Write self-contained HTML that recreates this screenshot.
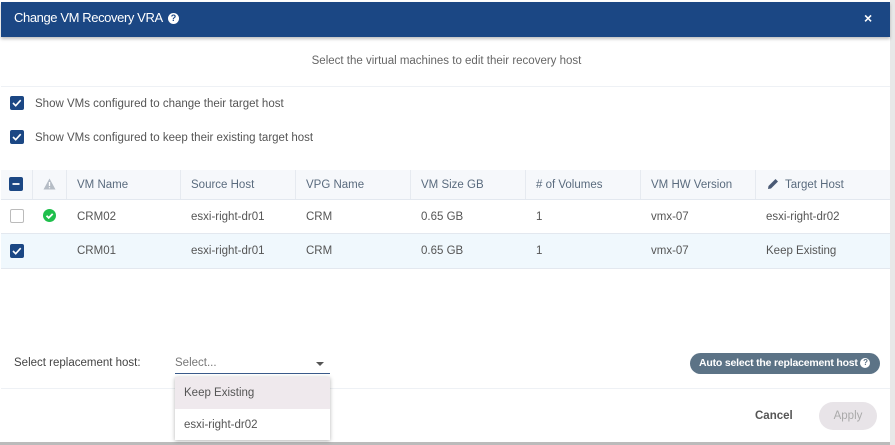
<!DOCTYPE html><html><head><style>
body{margin:0;width:895px;height:445px;background:#fff;font-family:"Liberation Sans",sans-serif;position:relative;overflow:hidden;font-size:11.5px;color:#555}
.a{position:absolute;white-space:nowrap}
.hdr{left:1px;top:2px;width:889px;height:35px;background:#1b4784;box-shadow:0 2px 3px rgba(0,0,0,.25)}
.cb{position:absolute;width:14px;height:14px;border-radius:2px;background:#1b4784}
.cb svg{position:absolute;left:1px;top:1px}
.cbe{position:absolute;width:12px;height:12px;border:1px solid #bbb;border-radius:2px;background:#fff}
.row{position:absolute;left:1px;width:889px;border-bottom:1px solid #e3e8ef}
.c{position:absolute;top:1px;line-height:inherit;white-space:nowrap}
</style></head><body>
<div style="position:absolute;left:890px;top:0;width:5px;height:445px;background:#e8e8e8"></div>
<div class="a" style="left:0;top:442px;width:890px;height:3px;background:#bbb"></div>
<div class="a hdr"></div>
<div class="a" style="left:14px;top:10px;color:#fff;font-size:13px;letter-spacing:-0.4px">Change VM Recovery VRA</div>
<div class="a" style="left:168px;top:13px;width:11px;height:11px;border-radius:50%;background:#fff;color:#1b4784;font-size:9px;font-weight:bold;text-align:center;line-height:11px">?</div>
<div class="a" style="left:864px;top:10px;color:#fff;font-size:14px;font-weight:bold">×</div>
<div class="a" style="left:0;top:55px;width:893px;text-align:center;color:#666">Select the virtual machines to edit their recovery host</div>
<div class="a" style="left:1px;top:86px;width:889px;border-top:1px solid #eef1f5"></div>
<div class="cb" style="left:10px;top:96px"><svg width="12" height="12"><path d="M2 6l2.7 2.7 5-5.5" stroke="#fff" stroke-width="1.6" fill="none"/></svg></div>
<div class="a" style="left:35px;top:98px">Show VMs configured to change their target host</div>
<div class="cb" style="left:10px;top:130px"><svg width="12" height="12"><path d="M2 6l2.7 2.7 5-5.5" stroke="#fff" stroke-width="1.6" fill="none"/></svg></div>
<div class="a" style="left:35px;top:132px">Show VMs configured to keep their existing target host</div>

<div class="row" style="top:170px;height:29px;line-height:29px;background:#f6f8fb;color:#5a6b7e">
<div class="cb" style="left:8px;top:7px"><svg width="12" height="12"><path d="M2.5 6h7" stroke="#fff" stroke-width="1.8"/></svg></div>
<div class="c" style="left:31px;top:0;height:29px;border-left:1px solid #e6eaf0"></div>
<svg class="a" style="left:42px;top:8px" width="13" height="12"><path d="M6.5 0.5L12.5 11.5H0.5Z" fill="#b5bcc5"/><path d="M6.5 4v4M6.5 9.3v1" stroke="#fff" stroke-width="1.3"/></svg>
<div class="c" style="left:65px;top:0;height:29px;border-left:1px solid #e6eaf0"></div>
<div class="c" style="left:76px">VM Name</div>
<div class="c" style="left:179px;top:0;height:29px;border-left:1px solid #e6eaf0"></div>
<div class="c" style="left:190px">Source Host</div>
<div class="c" style="left:294px;top:0;height:29px;border-left:1px solid #e6eaf0"></div>
<div class="c" style="left:305px">VPG Name</div>
<div class="c" style="left:409px;top:0;height:29px;border-left:1px solid #e6eaf0"></div>
<div class="c" style="left:420px">VM Size GB</div>
<div class="c" style="left:524px;top:0;height:29px;border-left:1px solid #e6eaf0"></div>
<div class="c" style="left:535px"># of Volumes</div>
<div class="c" style="left:639px;top:0;height:29px;border-left:1px solid #e6eaf0"></div>
<div class="c" style="left:650px">VM HW Version</div>
<div class="c" style="left:754px;top:0;height:29px;border-left:1px solid #e6eaf0"></div>
<svg class="a" style="left:766px;top:8px" width="12" height="12"><path d="M1 11l0.5-3 7-7 2.5 2.5-7 7z" fill="#4a5a75"/></svg>
<div class="c" style="left:784px">Target Host</div>
</div>

<div class="row" style="top:200px;height:33px;line-height:32px">
<div class="cbe" style="left:9px;top:9px"></div>
<svg class="a" style="left:42px;top:9px" width="13" height="13"><circle cx="6.5" cy="6.5" r="6.5" fill="#1fbf4c"/><path d="M3.5 6.7l2.2 2.2 4-4" stroke="#fff" stroke-width="1.8" fill="none"/></svg>
<div class="c" style="left:76px">CRM02</div><div class="c" style="left:190px">esxi-right-dr01</div><div class="c" style="left:305px">CRM</div><div class="c" style="left:420px">0.65 GB</div><div class="c" style="left:535px">1</div><div class="c" style="left:650px">vmx-07</div><div class="c" style="left:765px">esxi-right-dr02</div>
</div>
<div class="row" style="top:234px;height:34px;line-height:33px;background:#f0f8fd">
<div class="cb" style="left:9px;top:10px"><svg width="12" height="12"><path d="M2 6l2.7 2.7 5-5.5" stroke="#fff" stroke-width="1.6" fill="none"/></svg></div>
<div class="c" style="left:76px">CRM01</div><div class="c" style="left:190px">esxi-right-dr01</div><div class="c" style="left:305px">CRM</div><div class="c" style="left:420px">0.65 GB</div><div class="c" style="left:535px">1</div><div class="c" style="left:650px">vmx-07</div><div class="c" style="left:765px">Keep Existing</div>
</div>

<div class="a" style="left:14px;top:357px;color:#444">Select replacement host:</div>
<div class="a" style="left:175px;top:357px;width:155px;height:16px;border-bottom:1.5px solid #3a5a8a;color:#777">Select...</div>
<div class="a" style="left:316px;top:362px;width:0;height:0;border-left:4px solid transparent;border-right:4px solid transparent;border-top:4px solid #555"></div>
<div class="a" style="left:1px;top:388px;width:889px;border-top:1px solid #eef1f5"></div>
<div class="a" style="left:175px;top:377px;width:155px;height:63px;background:#fff;box-shadow:0 1px 4px rgba(0,0,0,.3)">
<div style="height:32px;line-height:33px;background:#efe9ed;padding-left:9px;color:#555">Keep Existing</div>
<div style="height:31px;line-height:32px;padding-left:9px;color:#555">esxi-right-dr02</div>
</div>
<div class="a" style="left:690px;top:353px;width:190px;height:21px;border-radius:11px;background:#5c7386;color:#fff;font-size:10.5px;font-weight:bold;line-height:21px;padding-left:9px;box-sizing:border-box;letter-spacing:-0.2px">Auto select the replacement host <span style="display:inline-block;width:10px;height:10px;border-radius:50%;background:#fff;color:#5c7386;font-size:8px;text-align:center;line-height:10px;vertical-align:1px">?</span></div>
<div class="a" style="left:755px;top:410px;color:#555;font-weight:bold">Cancel</div>
<div class="a" style="left:819px;top:402px;width:58px;height:28px;border-radius:14px;background:#e8e4e8;color:#aaa;text-align:center;line-height:29px">Apply</div>
</body></html>
